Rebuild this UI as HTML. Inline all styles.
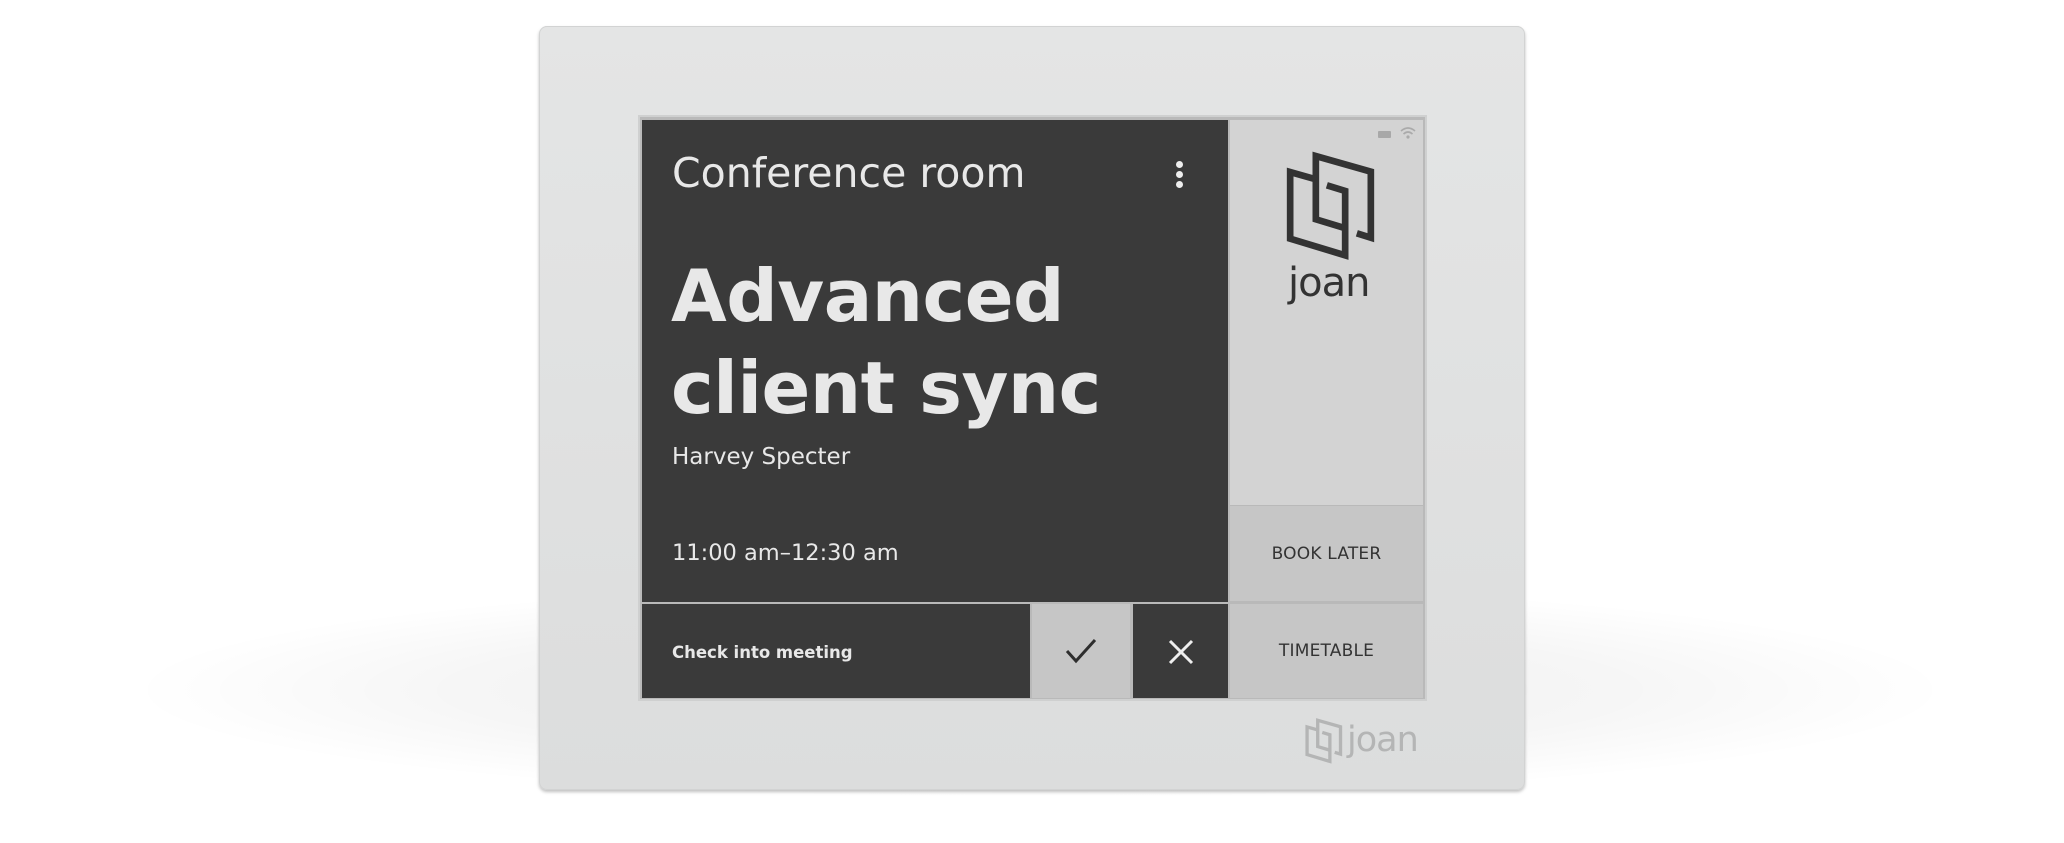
<!DOCTYPE html>
<html><head><meta charset="utf-8"><style>
html,body{margin:0;padding:0;width:2064px;height:843px;overflow:hidden;background:#fff;font-family:"Liberation Sans","DejaVu Sans",sans-serif}
.shadow{position:absolute;left:120px;top:580px;width:1840px;height:220px;border-radius:50%;background:radial-gradient(ellipse at center,rgba(0,0,0,.07) 0%,rgba(0,0,0,.035) 45%,rgba(0,0,0,0) 70%)}
.dev{position:absolute;left:539px;top:26px;width:986px;height:764px;background:linear-gradient(#e4e5e5,#dcdddd);border-radius:8px;box-shadow:0 2px 3px rgba(0,0,0,.25),inset 0 0 0 1px #d2d3d3}
.scr{position:absolute;left:640px;top:117px;width:785px;height:582px;background:#b9b9b9;box-shadow:0 0 0 2px #cfd0d0}
.dark{position:absolute;left:642px;top:120px;width:586px;height:482px;background:#3a3a3a}
.side{position:absolute;left:1230px;top:120px;width:193px;height:385px;background:#d3d3d3}
.btn{position:absolute;background:#c6c6c6;color:#333;font-size:17px;display:flex;align-items:center;justify-content:center;font-family:"DejaVu Sans",sans-serif;letter-spacing:.2px}
.t{position:absolute;color:#e8e8e8;font-family:"DejaVu Sans",sans-serif;white-space:nowrap}
</style></head><body>
<div class="shadow"></div>
<div class="dev"></div>
<div class="scr"></div>
<div class="dark"></div>
<div class="side"></div>
<div class="btn" style="left:1230px;top:506px;width:193px;height:95px">BOOK LATER</div>
<div class="btn" style="left:1230px;top:604px;width:193px;height:94px">TIMETABLE</div>
<div style="position:absolute;left:642px;top:604px;width:388px;height:94px;background:#3a3a3a"></div>
<div style="position:absolute;left:1032px;top:604px;width:98px;height:94px;background:#c6c6c6"></div>
<div style="position:absolute;left:1133px;top:604px;width:95px;height:94px;background:#3a3a3a"></div>
<div class="t" style="left:672px;top:147px;font-size:41px;line-height:52px">Conference room</div>
<div style="position:absolute;left:1176px;top:161px;width:7px;height:7px;border-radius:50%;background:#eee;box-shadow:0 10px 0 #eee,0 20px 0 #eee"></div>
<div class="t" style="left:671px;top:250px;font-size:72px;line-height:92px;font-weight:bold;letter-spacing:-0.5px">Advanced<br>client sync</div>
<div class="t" style="left:672px;top:444px;font-size:23px">Harvey Specter</div>
<div class="t" style="left:672px;top:540px;font-size:22.5px">11:00 am–12:30 am</div>
<div class="t" style="left:672px;top:643px;font-size:16.5px;font-weight:bold">Check into meeting</div>
<svg style="position:absolute;left:1064px;top:636px" width="34" height="30" viewBox="0 0 34 30"><path d="M3 15 L12 25 L31 4" fill="none" stroke="#2e2e2e" stroke-width="3"/></svg>
<svg style="position:absolute;left:1167px;top:638px" width="28" height="28" viewBox="0 0 28 28"><path d="M3 3L25 25M25 3L3 25" stroke="#eee" stroke-width="3"/></svg>
<div style="position:absolute;left:1378px;top:131px;width:13px;height:7px;background:#a8a8a8;border-radius:1px"></div>
<svg style="position:absolute;left:1400px;top:126px" width="16" height="14" viewBox="0 0 16 14"><path d="M1 5Q8 -1 15 5M3.5 8Q8 4 12.5 8" fill="none" stroke="#aaa" stroke-width="1.6"/><circle cx="8" cy="11" r="1.6" fill="#aaa"/></svg>
<svg style="position:absolute;left:1285px;top:151px" width="92" height="110" viewBox="195 125 275 330">
<g fill="none" stroke="#333" stroke-width="20" stroke-linejoin="miter">
<path d="M410 372 L452 385 L452 187 L287 140 L287 330 L370 355"/>
<path d="M320 228 L375 245 L375 438 L210 388 L210 188 L287 210"/>
</g></svg>
<div style="position:absolute;left:1288px;top:260px;font-size:40px;color:#333;font-family:'DejaVu Sans',sans-serif;letter-spacing:-1px">joan</div>
<svg style="position:absolute;left:1305px;top:718px" width="38" height="46" viewBox="195 125 275 330">
<g fill="none" stroke="#b4b5b5" stroke-width="24"><path d="M410 372 L452 385 L452 187 L287 140 L287 330 L370 355"/><path d="M320 228 L375 245 L375 438 L210 388 L210 188 L287 210"/></g></svg>
<div style="position:absolute;left:1347px;top:720px;font-size:35px;color:#b4b5b5;font-family:'DejaVu Sans',sans-serif;letter-spacing:-1px">joan</div>
</body></html>
